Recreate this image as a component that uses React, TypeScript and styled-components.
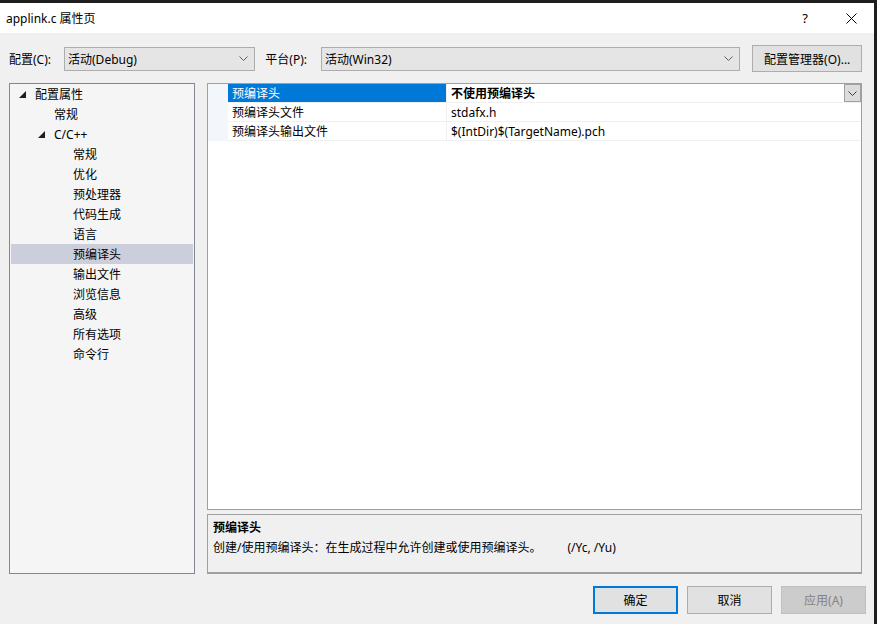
import React from 'react';
import styled, { createGlobalStyle, css } from 'styled-components';

const GlobalStyle = createGlobalStyle`
  html, body {
    margin: 0;
    padding: 0;
    background: #1e1e1e;
  }
  body {
    font-family: 'Noto Sans', 'Noto Sans CJK SC', sans-serif;
    font-size: 12px;
    color: #000;
  }
`;

const Desktop = styled.div`
  width: 877px;
  height: 624px;
  padding: 3px 3px 0 0;
  box-sizing: border-box;
  background: #1e1e1e;
  overflow: hidden;
`;

const Window = styled.div`
  width: 874px;
  height: 621px;
  display: flex;
  flex-direction: column;
  background: #f0f0f0;
`;

const TitleBar = styled.div`
  height: 30px;
  display: flex;
  align-items: center;
  background: #fff;
  padding-left: 6px;

  > .title {
    font-size: 12px;
    margin-right: auto;
  }
`;

const CaptionButton = styled.div`
  width: 46px;
  height: 30px;
  display: flex;
  align-items: center;
  justify-content: center;
  font-size: 13px;
`;

const Body = styled.div`
  flex: 1;
  display: flex;
  flex-direction: column;
  padding: 12px 12px 0 9px;
`;

const ConfigRow = styled.div`
  height: 27px;
  display: flex;
  align-items: center;
`;

const Label = styled.span<{ $gap: number }>`
  margin-right: ${(p) => p.$gap}px;
  white-space: nowrap;
`;

const Combo = styled.div<{ $width: number }>`
  width: ${(p) => p.$width}px;
  height: 24px;
  box-sizing: border-box;
  border: 1px solid #adadad;
  background: #e5e5e5;
  display: flex;
  align-items: center;
  padding: 0 6px 0 3px;

  > .text {
    margin-right: auto;
  }
`;

const Button = styled.div<{ $primary?: boolean; $disabled?: boolean }>`
  width: 85px;
  height: 28px;
  box-sizing: border-box;
  border: 1px solid #adadad;
  background: #e1e1e1;
  display: flex;
  align-items: center;
  justify-content: center;
  white-space: nowrap;

  ${(p) =>
    p.$primary &&
    css`
      border: 2px solid #0078d7;
    `}

  ${(p) =>
    p.$disabled &&
    css`
      background: #cccccc;
      border-color: #bfbfbf;
      color: #838383;
    `}
`;

const ManagerButton = styled(Button)`
  width: 110px;
  height: 27px;
  margin-left: 12px;
`;

const Main = styled.div`
  height: 491px;
  margin-top: 11px;
  display: flex;
  gap: 12px;
`;

const Tree = styled.div`
  width: 186px;
  box-sizing: border-box;
  border: 1px solid #828790;
  background: #f5f5f5;
  padding: 0 1px;
`;

const TreeRow = styled.div<{ $level: number; $selected?: boolean }>`
  height: 20px;
  display: flex;
  align-items: center;
  padding-left: ${(p) => 8 + p.$level * 19}px;
  background: ${(p) => (p.$selected ? '#cccedb' : 'transparent')};

  > .arrow {
    width: 16px;
    height: 20px;
    display: flex;
    align-items: center;
    justify-content: flex-start;
  }
`;

const Right = styled.div`
  flex: 1;
  display: flex;
  flex-direction: column;
  gap: 4px;
`;

const Grid = styled.div`
  flex: 1;
  box-sizing: border-box;
  border: 1px solid #a0a0a0;
  background: #fff;
  display: flex;
`;

const Gutter = styled.div`
  width: 20px;
  height: 57px;
  background: #f3f6fb;
`;

const Rows = styled.div`
  flex: 1;
  display: flex;
  flex-direction: column;
`;

const PropRow = styled.div`
  height: 19px;
  display: grid;
  grid-template-columns: 219px 1fr;
  border-bottom: 1px solid #f0f0f0;
  box-sizing: border-box;
`;

const NameCell = styled.div<{ $selected?: boolean }>`
  display: flex;
  align-items: center;
  padding-left: 4px;
  border-right: 1px solid #f0f0f0;
  background: ${(p) => (p.$selected ? '#0078d7' : 'transparent')};
  color: ${(p) => (p.$selected ? '#fff' : '#000')};
`;

const ValueCell = styled.div<{ $bold?: boolean }>`
  display: flex;
  align-items: center;
  padding-left: 4px;
  font-weight: ${(p) => (p.$bold ? 700 : 400)};

  > .text {
    margin-right: auto;
  }
`;

const DropButton = styled.div`
  width: 17px;
  height: 18px;
  box-sizing: border-box;
  border: 1px solid #a0a0a0;
  background: #dcdcdc;
  display: flex;
  align-items: center;
  justify-content: center;
  align-self: flex-start;
`;

const Description = styled.div`
  height: 60px;
  box-sizing: border-box;
  border: 1px solid #a0a0a0;
  border-bottom-width: 2px;
  background: #f0f0f0;
  padding: 3px 5px;
  line-height: 20px;

  > .heading {
    font-weight: 700;
  }

  > .detail .flag {
    margin-left: 26px;
  }
`;

const Footer = styled.div`
  display: flex;
  justify-content: flex-end;
  gap: 9px;
  margin-top: 12px;
  margin-right: -4px;
`;

const Chevron = ({ color = '#606060' }: { color?: string }) => (
  <svg width="9" height="5" viewBox="0 0 9 5">
    <polyline points="0.5,0.5 4.5,4.5 8.5,0.5" fill="none" stroke={color} strokeWidth="1" />
  </svg>
);

const Expander = () => (
  <svg width="7" height="7" viewBox="0 0 7 7">
    <polygon points="7,0 7,7 0,7" fill="#1e1e1e" />
  </svg>
);

const treeItems = [
  { label: '配置属性', level: 0, open: true },
  { label: '常规', level: 1 },
  { label: 'C/C++', level: 1, open: true },
  { label: '常规', level: 2 },
  { label: '优化', level: 2 },
  { label: '预处理器', level: 2 },
  { label: '代码生成', level: 2 },
  { label: '语言', level: 2 },
  { label: '预编译头', level: 2, selected: true },
  { label: '输出文件', level: 2 },
  { label: '浏览信息', level: 2 },
  { label: '高级', level: 2 },
  { label: '所有选项', level: 2 },
  { label: '命令行', level: 2 },
];

const props = [
  { name: '预编译头', value: '不使用预编译头', selected: true },
  { name: '预编译头文件', value: 'stdafx.h' },
  { name: '预编译头输出文件', value: '$(IntDir)$(TargetName).pch' },
];

export default function App() {
  return (
    <Desktop>
      <GlobalStyle />
      <Window>
        <TitleBar>
          <span className="title">applink.c 属性页</span>
          <CaptionButton>?</CaptionButton>
          <CaptionButton>
            <svg width="11" height="11" viewBox="0 0 11 11">
              <path d="M0.5 0.5 L10.5 10.5 M10.5 0.5 L0.5 10.5" stroke="#000" strokeWidth="1" />
            </svg>
          </CaptionButton>
        </TitleBar>

        <Body>
          <ConfigRow>
            <Label $gap={13}>配置(C):</Label>
            <Combo $width={192}>
              <span className="text">活动(Debug)</span>
              <Chevron />
            </Combo>
            <Label $gap={14} style={{ marginLeft: 10 }}>平台(P):</Label>
            <Combo $width={421}>
              <span className="text">活动(Win32)</span>
              <Chevron />
            </Combo>
            <ManagerButton>配置管理器(O)...</ManagerButton>
          </ConfigRow>

          <Main>
            <Tree>
              {treeItems.map((item, i) => (
                <TreeRow key={i} $level={item.level} $selected={item.selected}>
                  {item.open ? (
                    <span className="arrow">
                      <Expander />
                    </span>
                  ) : (
                    <span className="arrow" />
                  )}
                  <span>{item.label}</span>
                </TreeRow>
              ))}
            </Tree>

            <Right>
              <Grid>
                <Gutter />
                <Rows>
                  {props.map((p) => (
                    <PropRow key={p.name}>
                      <NameCell $selected={p.selected}>{p.name}</NameCell>
                      <ValueCell $bold={p.selected}>
                        <span className="text">{p.value}</span>
                        {p.selected && (
                          <DropButton>
                            <Chevron color="#404040" />
                          </DropButton>
                        )}
                      </ValueCell>
                    </PropRow>
                  ))}
                </Rows>
              </Grid>
              <Description>
                <div className="heading">预编译头</div>
                <div className="detail">
                  创建/使用预编译头：在生成过程中允许创建或使用预编译头。
                  <span className="flag">(/Yc, /Yu)</span>
                </div>
              </Description>
            </Right>
          </Main>

          <Footer>
            <Button $primary>确定</Button>
            <Button>取消</Button>
            <Button $disabled>应用(A)</Button>
          </Footer>
        </Body>
      </Window>
    </Desktop>
  );
}
